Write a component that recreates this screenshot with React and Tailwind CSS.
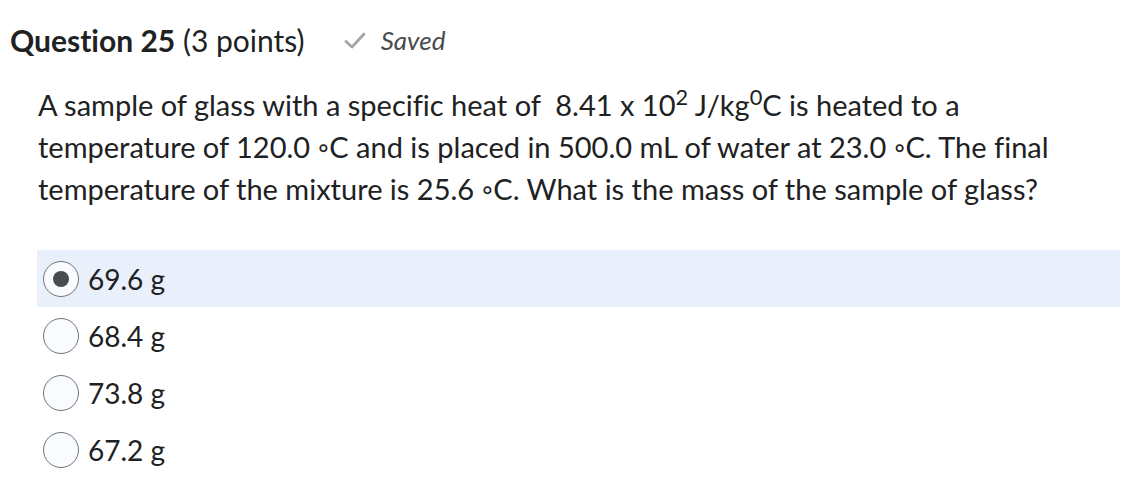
import React from 'react';

const options = ['69.6 g', '68.4 g', '73.8 g', '67.2 g'];

export default function App() {
  return (
    <div className="w-[1148px] h-[496px] bg-white text-[#202122] [font-feature-settings:'liga'_0,'clig'_0] [font-variant-ligatures:no-common-ligatures]" style={{ fontFamily: 'Lato, "Open Sans", sans-serif' }}>
      <div className="flex items-center pl-[10px] pt-[20px] h-[40px] box-content">
        <h2 className="text-[30px] leading-none">
          <span className="font-bold">Question 25</span> <span>(3 points)</span>
        </h2>
        <div className="flex items-center ml-[38px] text-[#494c4e]">
          <svg width="24" height="20" viewBox="0 0 24 20" fill="none" className="mt-[2px]">
            <path d="M3 10.5 L9 16 L21 3" stroke="#a3a6a9" strokeWidth="2.8" strokeLinecap="round" strokeLinejoin="round" />
          </svg>
          <span className="ml-[14px] italic text-[26px] leading-none">Saved</span>
        </div>
      </div>
      <p className="mt-[24px] ml-[38px] mr-[80px] text-[29px] leading-[42px]">
        A sample of glass with a speci&#8204;fic heat of&nbsp; 8.41 x 10<sup>2</sup> J/kg<sup>0</sup>C is heated to a temperature of 120.0 ◦C and is placed in 500.0 mL of water at 23.0 ◦C. The f&#8204;inal temperature of the mixture is 25.6 ◦C. What is the mass of the sample of glass?
      </p>
      <div className="mt-[40px] ml-[37px] mr-[28px] flex flex-col">
        {options.map((opt, i) => (
          <label key={opt} className={`flex items-center h-[57px] pl-[6px] ${i === 0 ? 'bg-[#e9f0fb]' : ''}`}>
            <span className="w-[36px] h-[36px] rounded-full border border-[#6e7376] bg-[#f9fbff] flex items-center justify-center shrink-0">
              {i === 0 && <span className="w-[16px] h-[16px] rounded-full bg-[#494c4e]" />}
            </span>
            <span className="ml-[9px] text-[28px] leading-none">{opt}</span>
          </label>
        ))}
      </div>
    </div>
  );
}
